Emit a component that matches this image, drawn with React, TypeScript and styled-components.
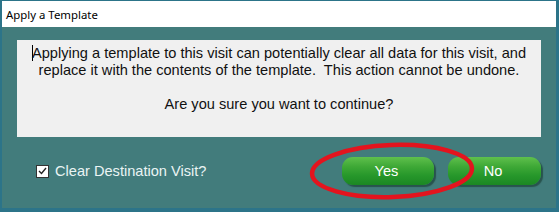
import React from "react";
import styled, { createGlobalStyle } from "styled-components";

const Global = createGlobalStyle`
  html, body { margin: 0; padding: 0; background: #ffffff; }
  body { width: 559px; height: 212px; overflow: hidden; }
`;

const Window = styled.div`
  position: relative;
  box-sizing: border-box;
  width: 559px;
  height: 212px;
  background: #427c7c;
  border-style: solid;
  border-color: #2c7489;
  border-width: 1px 3px 4px 2px;
  display: flex;
  flex-direction: column;
`;

const TitleBar = styled.div`
  height: 26px;
  background: #ffffff;
  display: flex;
  align-items: center;
  padding-left: 4px;
  font-family: "Noto Sans", "Open Sans", sans-serif;
  font-size: 11.4px;
  color: #000;
`;

const Body = styled.div`
  flex: 1;
  display: flex;
  flex-direction: column;
  padding: 13px 15px 0 15px;
`;

const Panel = styled.div`
  height: 97px;
  background: #f0f0f0;
  box-sizing: border-box;
  padding-top: 5px;
  font-family: "Liberation Sans", Arial, sans-serif;
  font-size: 14.6px;
  line-height: 17px;
  color: #111;
  text-align: center;
`;

const Line = styled.div<{ $gap?: number }>`
  margin-top: ${(p) => p.$gap ?? 0}px;
  white-space: pre;
`;

const Caret = styled.span`
  display: inline-block;
  width: 1px;
  height: 16px;
  background: #000;
  vertical-align: -3px;
  margin-right: -1px;
`;

const Footer = styled.div`
  display: flex;
  align-items: center;
  margin-top: 20px;
  height: 28px;
`;

const CheckLabel = styled.label`
  display: flex;
  align-items: center;
  gap: 6px;
  margin-left: 19px;
  font-family: "Liberation Sans", Arial, sans-serif;
  font-size: 14.6px;
  color: #eaf4f4;
`;

const Box = styled.span`
  width: 11px;
  height: 11px;
  background: #fff;
  border: 1px solid #333;
  display: flex;
  align-items: center;
  justify-content: center;
`;

const Buttons = styled.div`
  margin-left: auto;
  display: flex;
  gap: 14px;
`;

const GreenButton = styled.button<{ $w: number }>`
  width: ${(p) => p.$w}px;
  height: 28px;
  border: none;
  border-radius: 11px;
  background: linear-gradient(#5fc04c 0%, #3ea836 35%, #27982b 65%, #1b8723 100%);
  box-shadow: 2px 2px 1px rgba(20, 50, 40, 0.55);
  color: #ffffff;
  font-family: "Liberation Sans", Arial, sans-serif;
  font-size: 14.6px;
  padding: 0 3px 0 0;
  cursor: pointer;
`;

const Ellipse = styled.svg`
  position: absolute;
  left: 306px;
  top: 140px;
`;

export default function App() {
  return (
    <>
      <Global />
      <Window>
        <TitleBar>Apply a Template</TitleBar>
        <Body>
          <Panel>
            <Line>
              <Caret />
              Applying a template to this visit can potentially clear all data for this visit, and
            </Line>
            <Line>replace it with the contents of the template.  This action cannot be undone.</Line>
            <Line $gap={17}>Are you sure you want to continue?</Line>
          </Panel>
          <Footer>
            <CheckLabel>
              <Box>
                <svg width="9" height="8" viewBox="0 0 9 8">
                  <path d="M1 4 L3.5 6.5 L8 1" fill="none" stroke="#222" strokeWidth="1.4" />
                </svg>
              </Box>
              Clear Destination Visit?
            </CheckLabel>
            <Buttons>
              <GreenButton $w={92}>Yes</GreenButton>
              <GreenButton $w={93}>No</GreenButton>
            </Buttons>
          </Footer>
        </Body>
        <Ellipse width="170" height="62" viewBox="0 0 170 62">
          <ellipse cx="84" cy="30" rx="80" ry="26" fill="none" stroke="#e3141e" strokeWidth="4.5" transform="rotate(-2 84 30)" />
        </Ellipse>
      </Window>
    </>
  );
}
